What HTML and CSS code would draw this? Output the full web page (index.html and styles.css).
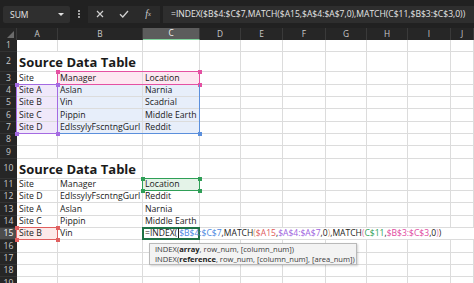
FILE: index.html
```html
<!DOCTYPE html>
<html>
<head>
<meta charset="utf-8">
<link rel="stylesheet" href="styles.css">
</head>
<body>
<div class="fbar">
  <div class="namebox"><span>SUM</span><span class="caret"></span></div>
  <div class="dots"><i></i><i></i><i></i></div>
  <div class="btns">
    <span class="btn"><svg width="8" height="8" viewBox="0 0 8 8"><path d="M1 1L7 7M7 1L1 7" stroke="#d0d0d0" stroke-width="1.2" fill="none"/></svg></span>
    <span class="btn"><svg width="10" height="8" viewBox="0 0 10 8"><path d="M1 4.2L3.8 7L9 1" stroke="#d0d0d0" stroke-width="1.3" fill="none"/></svg></span>
    <span class="btn fx">f<sub>x</sub></span>
  </div>
  <div class="fx-input">=INDEX($B$4:$C$7,MATCH($A15,$A$4:$A$7,0),MATCH(C$11,$B$3:$C$3,0))</div>
</div>
<div class="sheet">
  <div class="grid cells">
    <div class="corner"><span class="tri"></span></div><div class="ch">A</div><div class="ch">B</div><div class="ch sel">C</div><div class="ch">D</div><div class="ch">E</div><div class="ch">F</div><div class="ch">G</div><div class="ch">H</div><div class="ch">I</div><div class="ch">J</div>

    <div class="rh">1</div><div class="c"></div><div class="c"></div><div class="c"></div><div class="c"></div><div class="c"></div><div class="c"></div><div class="c"></div><div class="c"></div><div class="c"></div><div class="c"></div>
    <div class="rh">2</div><div class="c title span2">Source Data Table</div><div class="c"></div><div class="c"></div><div class="c"></div><div class="c"></div><div class="c"></div><div class="c"></div><div class="c"></div><div class="c"></div>
    <div class="rh">3</div><div class="c">Site</div><div class="c f-pink">Manager</div><div class="c f-pink">Location</div><div class="c"></div><div class="c"></div><div class="c"></div><div class="c"></div><div class="c"></div><div class="c"></div><div class="c"></div>
    <div class="rh">4</div><div class="c f-purple">Site A</div><div class="c f-blue">Aslan</div><div class="c f-blue">Narnia</div><div class="c"></div><div class="c"></div><div class="c"></div><div class="c"></div><div class="c"></div><div class="c"></div><div class="c"></div>
    <div class="rh">5</div><div class="c f-purple">Site B</div><div class="c f-blue">Vin</div><div class="c f-blue">Scadrial</div><div class="c"></div><div class="c"></div><div class="c"></div><div class="c"></div><div class="c"></div><div class="c"></div><div class="c"></div>
    <div class="rh">6</div><div class="c f-purple">Site C</div><div class="c f-blue">Pippin</div><div class="c f-blue">Middle Earth</div><div class="c"></div><div class="c"></div><div class="c"></div><div class="c"></div><div class="c"></div><div class="c"></div><div class="c"></div>
    <div class="rh">7</div><div class="c f-purple">Site D</div><div class="c f-blue">EdlssylyFscntngGurl</div><div class="c f-blue">Reddit</div><div class="c"></div><div class="c"></div><div class="c"></div><div class="c"></div><div class="c"></div><div class="c"></div><div class="c"></div>
    <div class="rh">8</div><div class="c"></div><div class="c"></div><div class="c"></div><div class="c"></div><div class="c"></div><div class="c"></div><div class="c"></div><div class="c"></div><div class="c"></div><div class="c"></div>
    <div class="rh">9</div><div class="c"></div><div class="c"></div><div class="c"></div><div class="c"></div><div class="c"></div><div class="c"></div><div class="c"></div><div class="c"></div><div class="c"></div><div class="c"></div>
    <div class="rh">10</div><div class="c title span2">Source Data Table</div><div class="c"></div><div class="c"></div><div class="c"></div><div class="c"></div><div class="c"></div><div class="c"></div><div class="c"></div><div class="c"></div>
    <div class="rh">11</div><div class="c">Site</div><div class="c">Manager</div><div class="c f-green">Location</div><div class="c"></div><div class="c"></div><div class="c"></div><div class="c"></div><div class="c"></div><div class="c"></div><div class="c"></div>
    <div class="rh">12</div><div class="c">Site D</div><div class="c">EdlssylyFscntngGurl</div><div class="c">Reddit</div><div class="c"></div><div class="c"></div><div class="c"></div><div class="c"></div><div class="c"></div><div class="c"></div><div class="c"></div>
    <div class="rh">13</div><div class="c">Site A</div><div class="c">Aslan</div><div class="c">Narnia</div><div class="c"></div><div class="c"></div><div class="c"></div><div class="c"></div><div class="c"></div><div class="c"></div><div class="c"></div>
    <div class="rh">14</div><div class="c">Site C</div><div class="c">Pippin</div><div class="c">Middle Earth</div><div class="c"></div><div class="c"></div><div class="c"></div><div class="c"></div><div class="c"></div><div class="c"></div><div class="c"></div>
    <div class="rh sel">15</div><div class="c f-red">Site B</div><div class="c">Vin</div><div class="c formula"><span class="ftext">=INDEX(<span class="caretline"></span><span class="k-blue">$B$4:$C$7</span>,MATCH<span class="k-par">(</span><span class="k-red">$A15</span>,<span class="k-purple">$A$4:$A$7</span>,0<span class="k-par">)</span>,MATCH<span class="k-par2">(</span><span class="k-green">C$11</span>,<span class="k-pink">$B$3:$C$3</span>,0<span class="k-par2">)</span>)</span></div>
    <div class="rh">16</div><div class="c"></div><div class="c"></div><div class="c"></div><div class="c"></div><div class="c"></div><div class="c"></div><div class="c"></div><div class="c"></div><div class="c"></div><div class="c"></div>
    <div class="rh">17</div><div class="c"></div><div class="c"></div><div class="c"></div><div class="c"></div><div class="c"></div><div class="c"></div><div class="c"></div><div class="c"></div><div class="c"></div><div class="c"></div>
    <div class="rh">18</div><div class="c"></div><div class="c"></div><div class="c"></div><div class="c"></div><div class="c"></div><div class="c"></div><div class="c"></div><div class="c"></div><div class="c"></div><div class="c"></div>
    <div class="rh">19</div><div class="c"></div><div class="c"></div><div class="c"></div><div class="c"></div><div class="c"></div><div class="c"></div><div class="c"></div><div class="c"></div><div class="c"></div><div class="c"></div>
  </div>
  <div class="grid overlay">
    <div class="rng r-pink"><i class="h tl"></i><i class="h tr"></i><i class="h bl"></i><i class="h br"></i></div>
    <div class="rng r-blue"><i class="h bl"></i><i class="h br"></i></div>
    <div class="rng r-purple"><i class="h tl"></i><i class="h tr"></i><i class="h bl"></i><i class="h br"></i></div>
    <div class="rng r-green"><i class="h tl"></i><i class="h tr"></i><i class="h bl"></i><i class="h br"></i></div>
    <div class="rng r-red"><i class="h tl"></i><i class="h tr"></i><i class="h bl"></i><i class="h br"></i></div>
    <div class="active"></div>
  </div>
  <div class="tip">
    <div>INDEX(<b>array</b>, row_num, [column_num])</div>
    <div>INDEX(<b>reference</b>, row_num, [column_num], [area_num])</div>
  </div>
</div>
</body>
</html>
```
FILE: styles.css
```css
* { box-sizing: border-box; margin: 0; padding: 0; }
html, body { width: 474px; height: 283px; overflow: hidden; }
body { margin: 0; background: #212121; font-family: "Open Sans", sans-serif; }

.fbar { height: 28px; display: flex; align-items: center; padding-left: 3px; }
.namebox { width: 67px; height: 17px; background: #2f2f2f; border-radius: 2px; display: flex; align-items: center; justify-content: space-between; padding: 0 6px 0 7px; color: #e6e6e6; font-size: 8.5px; }
.caret { width: 0; height: 0; border-left: 3px solid transparent; border-right: 3px solid transparent; border-top: 3.5px solid #e0e0e0; }
.dots { width: 18px; height: 17px; display: flex; flex-direction: column; align-items: center; justify-content: center; gap: 1.5px; }
.dots i { width: 1.5px; height: 1.5px; background: #bdbdbd; border-radius: 50%; }
.btns { width: 72px; height: 17px; background: #2a2a2a; display: flex; align-items: center; margin-right: 3px; }
.btn { width: 24px; display: flex; justify-content: center; align-items: center; color: #d0d0d0; }
.btn svg { display: block; }
.fx { font-family: "Liberation Serif", serif; font-style: italic; font-size: 10px; line-height: 10px; }
.fx sub { font-size: 6.5px; vertical-align: -1px; }
.fx-input { flex: 1; height: 17px; background: #2e2e2e; color: #e6e6e6; font-size: 8.55px; padding-left: 8px; display: flex; align-items: center; white-space: nowrap; overflow: hidden; }

.sheet { display: grid; position: relative; background: #fff; }
.sheet > .grid { grid-area: 1 / 1; }
.grid { display: grid; grid-template-columns: 17px 41px 85px 57px 41px 42px 43px 41px 41px 43px 23px; grid-template-rows: 12px 12px 20px 13px 12px 12px 13px 12px 12px 13px 20px 12px 12px 13px 12px 12px 13px 12px 12px 13px; }
.overlay { pointer-events: none; position: relative; z-index: 1; }

.corner { background: #262626; position: relative; border-right: 1px solid #3a3a3a; }
.tri { position: absolute; right: 2px; bottom: 2px; width: 0; height: 0; border-left: 7px solid transparent; border-bottom: 7px solid #6b6b6b; }
.ch { background: #262626; color: #c9c9c9; font-size: 8.3px; display: flex; align-items: center; justify-content: center; border-right: 1px solid #3a3a3a; line-height: 1; }
.ch.sel { background: #5c5c5c; color: #f2f2f2; border-bottom: 1px solid #7fd39c; }
.rh { background: #262626; color: #c9c9c9; font-size: 8.6px; display: flex; align-items: center; justify-content: center; border-bottom: 1px solid #333; line-height: 1; }
.rh.sel { background: #4d4d4d; color: #f2f2f2; }

.c { border-right: 1px solid #dcdcdc; border-bottom: 1px solid #dcdcdc; font-size: 8.7px; color: #1a1a1a; display: flex; align-items: flex-end; padding-left: 2px; line-height: 11px; white-space: nowrap; min-width: 0; }
.title { font-weight: 700; font-size: 13px; line-height: 17px; }
.span2 { grid-column: span 2; }
.formula { grid-column: span 8; border-right: none; padding-left: 2px; font-size: 8.55px; }
.ftext { display: block; white-space: nowrap; position: relative; z-index: 2; }
.caretline { display: inline-block; width: 1px; height: 10px; background: #222; margin: 0 0.5px; vertical-align: -2px; }
.f-pink { background: #fde7f1; }
.f-blue { background: #e7eefa; }
.f-purple { background: #f0e8fa; }
.f-green { background: #e4f3e8; }
.f-red { background: #fde9e9; }
.k-blue { color: #4a86e0; }
.k-red { color: #e05a5a; }
.k-purple { color: #9d62e0; }
.k-green { color: #2f9f57; }
.k-pink { color: #e0479e; }
.k-par { color: #d9a36f; }
.k-par2 { color: #e07ab0; }

.rng { position: relative; margin: -1px 0 0 -1px; border: 1px solid; }
.r-pink { grid-row: 4; grid-column: 3 / 5; border-color: #e450a2; }
.r-blue { grid-row: 5 / 9; grid-column: 3 / 5; border-color: #5b8fdc; border-top-color: transparent; }
.r-purple { grid-row: 5 / 9; grid-column: 2 / 3; border-color: #a46ae2; }
.r-green { grid-row: 12; grid-column: 4 / 5; border-color: #2f9f57; }
.r-red { grid-row: 16; grid-column: 2 / 3; border-color: #e06060; }
.h { position: absolute; width: 4px; height: 4px; }
.r-pink .h { background: #e450a2; }
.r-blue .h { background: #5b8fdc; }
.r-purple .h { background: #a46ae2; }
.r-green .h { background: #2f9f57; }
.r-red .h { background: #e06060; }
.tl { top: -2.5px; left: -2.5px; }
.tr { top: -2.5px; right: -2.5px; }
.bl { bottom: -2.5px; left: -2.5px; }
.br { bottom: -2.5px; right: -2.5px; }
.active { grid-row: 16; grid-column: 4 / 5; margin: -1px 0 0 -1px; border: 2px solid #1f7246; }

.tip { position: absolute; z-index: 3; left: 149px; top: 215px; width: 208px; height: 22px; background: #f3f3f3; border: 1px solid #b9b9b9; box-shadow: 1px 1px 2px rgba(0,0,0,0.18); font-size: 7.6px; line-height: 9.5px; color: #3a3a3a; padding: 1px 0 0 5px; white-space: nowrap; }
.tip b { font-weight: 700; color: #222; }
```
